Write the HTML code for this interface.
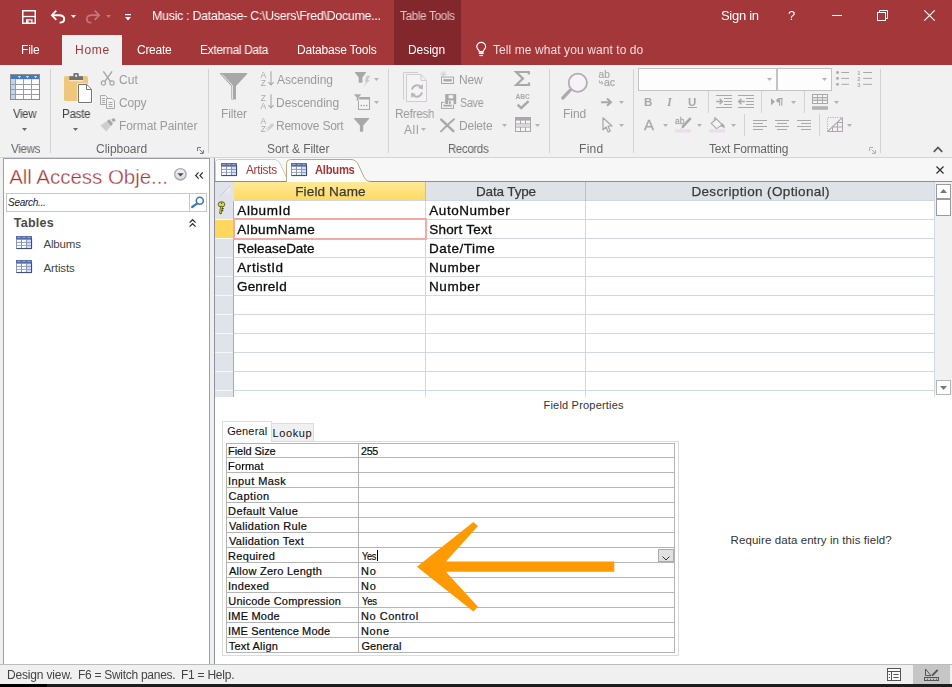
<!DOCTYPE html>
<html lang="en"><head><meta charset="utf-8"><title>Music : Database - Access</title>
<style>
html,body{margin:0;padding:0}
body{width:952px;height:687px;position:relative;overflow:hidden;background:#f0f0f0;font-family:"Liberation Sans",sans-serif}
.b{position:absolute;box-sizing:border-box;display:block}
.g,svg{will-change:transform}
.t{position:absolute;white-space:nowrap;margin:0;padding:0;transform-origin:0 0}
svg{overflow:visible}
</style></head><body>
<div class="b" style="left:0px;top:0px;width:952px;height:65px;background:#a4373a"></div>
<div class="b" style="left:394px;top:0px;width:67px;height:65px;background:#82282c"></div>
<div class="b" style="left:62px;top:35px;width:60px;height:31px;background:#f1f1f1"></div>
<div class="t g" style="left:151.79px;top:9px;font-size:13px;line-height:13px;color:#fff;letter-spacing:-0.300px;transform:scaleX(0.9532);">Music : Database- C:\Users\Fred\Docume...</div>
<div class="t g" style="left:399.76px;top:10px;font-size:12px;line-height:12px;color:#e6c3c4;letter-spacing:-0.300px;transform:scaleX(0.9693);">Table Tools</div>
<div class="t g" style="left:721.08px;top:9px;font-size:13px;line-height:13px;color:#fff;letter-spacing:-0.300px;transform:scaleX(0.9877);">Sign in</div>
<div class="t g" style="left:787.54px;top:9px;font-size:13px;line-height:13px;color:#fff;">?</div>
<div class="t g" style="left:20.80px;top:44px;font-size:12px;line-height:12px;color:#fff;letter-spacing:-0.204px;">File</div>
<div class="t g" style="left:74.70px;top:44px;font-size:12px;line-height:12px;color:#a4373a;letter-spacing:0.754px;">Home</div>
<div class="t g" style="left:136.78px;top:44px;font-size:12px;line-height:12px;color:#fff;letter-spacing:-0.275px;">Create</div>
<div class="t g" style="left:199.61px;top:44px;font-size:12px;line-height:12px;color:#fff;letter-spacing:-0.300px;transform:scaleX(0.9884);">External Data</div>
<div class="t g" style="left:296.60px;top:44px;font-size:12px;line-height:12px;color:#fff;letter-spacing:-0.220px;">Database Tools</div>
<div class="t g" style="left:408.40px;top:44px;font-size:12px;line-height:12px;color:#fff;letter-spacing:-0.052px;">Design</div>
<div class="t g" style="left:493.25px;top:44px;font-size:12px;line-height:12px;color:#f3dcdc;letter-spacing:0.084px;">Tell me what you want to do</div>
<div class="b" style="left:0px;top:65px;width:952px;height:92px;background:#f1f1f1"></div>
<div class="b" style="left:0px;top:157px;width:952px;height:1px;background:#d4d4d4"></div>
<div class="b" style="left:50px;top:69px;width:1px;height:84px;background:#d2d2d2"></div>
<div class="b" style="left:208px;top:69px;width:1px;height:84px;background:#d2d2d2"></div>
<div class="b" style="left:388px;top:69px;width:1px;height:84px;background:#d2d2d2"></div>
<div class="b" style="left:549px;top:69px;width:1px;height:84px;background:#d2d2d2"></div>
<div class="b" style="left:633px;top:69px;width:1px;height:84px;background:#d2d2d2"></div>
<div class="b" style="left:880px;top:69px;width:1px;height:84px;background:#d2d2d2"></div>
<div class="b" style="left:708px;top:91px;width:1px;height:22px;background:#d2d2d2"></div>
<div class="b" style="left:761px;top:91px;width:1px;height:22px;background:#d2d2d2"></div>
<div class="b" style="left:804px;top:91px;width:1px;height:22px;background:#d2d2d2"></div>
<div class="b" style="left:744px;top:114px;width:1px;height:22px;background:#d2d2d2"></div>
<div class="b" style="left:819px;top:114px;width:1px;height:22px;background:#d2d2d2"></div>
<div class="t g" style="left:12.54px;top:108px;font-size:12px;line-height:12px;color:#444444;letter-spacing:-0.300px;transform:scaleX(0.9416);">View</div>
<div class="t g" style="left:10.54px;top:143px;font-size:12px;line-height:12px;color:#666666;letter-spacing:-0.300px;transform:scaleX(0.9664);">Views</div>
<div class="t g" style="left:61.93px;top:108px;font-size:12px;line-height:12px;color:#444444;letter-spacing:-0.300px;transform:scaleX(0.9705);">Paste</div>
<div class="t g" style="left:119.17px;top:74px;font-size:12px;line-height:12px;color:#9b9b9b;letter-spacing:0.081px;">Cut</div>
<div class="t g" style="left:119.17px;top:97px;font-size:12px;line-height:12px;color:#9b9b9b;letter-spacing:-0.158px;">Copy</div>
<div class="t g" style="left:118.80px;top:120px;font-size:12px;line-height:12px;color:#9b9b9b;letter-spacing:-0.076px;">Format Painter</div>
<div class="t g" style="left:95.97px;top:143px;font-size:12px;line-height:12px;color:#666666;letter-spacing:-0.030px;">Clipboard</div>
<div class="t g" style="left:221.20px;top:108px;font-size:12px;line-height:12px;color:#9b9b9b;letter-spacing:-0.140px;">Filter</div>
<div class="t g" style="left:277.20px;top:74px;font-size:12px;line-height:12px;color:#9b9b9b;letter-spacing:-0.006px;">Ascending</div>
<div class="t g" style="left:276.20px;top:97px;font-size:12px;line-height:12px;color:#9b9b9b;letter-spacing:-0.029px;">Descending</div>
<div class="t g" style="left:276.20px;top:120px;font-size:12px;line-height:12px;color:#9b9b9b;letter-spacing:-0.234px;">Remove Sort</div>
<div class="t g" style="left:266.74px;top:143px;font-size:12px;line-height:12px;color:#666666;letter-spacing:-0.077px;">Sort &amp; Filter</div>
<div class="t g" style="left:394.61px;top:108px;font-size:12px;line-height:12px;color:#9b9b9b;letter-spacing:-0.300px;transform:scaleX(0.9857);">Refresh</div>
<div class="t g" style="left:404.20px;top:124px;font-size:12px;line-height:12px;color:#9b9b9b;letter-spacing:0.619px;">All</div>
<div class="t g" style="left:459.00px;top:74px;font-size:12px;line-height:12px;color:#9b9b9b;letter-spacing:-0.150px;">New</div>
<div class="t g" style="left:459.50px;top:97px;font-size:12px;line-height:12px;color:#9b9b9b;letter-spacing:-0.300px;transform:scaleX(0.8955);">Save</div>
<div class="t g" style="left:459.00px;top:120px;font-size:12px;line-height:12px;color:#9b9b9b;letter-spacing:-0.225px;">Delete</div>
<div class="t g" style="left:448.05px;top:143px;font-size:12px;line-height:12px;color:#666666;letter-spacing:-0.300px;transform:scaleX(0.9457);">Records</div>
<div class="t g" style="left:563.20px;top:108px;font-size:12px;line-height:12px;color:#9b9b9b;letter-spacing:-0.054px;">Find</div>
<div class="t g" style="left:579.30px;top:143px;font-size:12px;line-height:12px;color:#666666;letter-spacing:0.312px;">Find</div>
<div class="t g" style="left:709.05px;top:143px;font-size:12px;line-height:12px;color:#666666;letter-spacing:-0.230px;">Text Formatting</div>
<div class="b" style="left:3px;top:158px;width:207px;height:506px;background:#fff;border:1px solid #9aa0a8;border-bottom:none"></div>
<div class="t" style="left:9.14px;top:167px;font-size:20.5px;line-height:20.5px;color:#a4373a;letter-spacing:-0.033px;-webkit-text-stroke:0.35px #fff;">All Access Obje...</div>
<div class="b" style="left:6px;top:193px;width:201px;height:19px;background:#fff;border:1px solid #c8c8c8"></div>
<div class="b" style="left:189px;top:194px;width:1px;height:17px;background:#c8c8c8"></div>
<div class="t" style="left:7.90px;top:197px;font-size:10.5px;line-height:10.5px;color:#1a1a2a;letter-spacing:-0.300px;transform:scaleX(0.9517);font-style:italic;">Search...</div>
<div class="t" style="left:13.78px;top:217px;font-size:12.5px;line-height:12.5px;color:#4d4a48;letter-spacing:0.248px;font-weight:bold;">Tables</div>
<div class="t" style="left:43.50px;top:239px;font-size:11.5px;line-height:11.5px;color:#444444;letter-spacing:-0.188px;">Albums</div>
<div class="t" style="left:43.50px;top:263px;font-size:11.5px;line-height:11.5px;color:#444444;letter-spacing:-0.100px;">Artists</div>
<div class="b" style="left:214px;top:158px;width:738px;height:506px;background:#fff;border-left:1px solid #8d9199"></div>
<div class="b" style="left:215px;top:158px;width:737px;height:24px;background:#f7f7f7"></div>
<div class="b" style="left:215px;top:181px;width:737px;height:1px;background:#8e8e8e"></div>
<svg class="b" style="left:215px;top:158px" width="160" height="24" viewBox="0 0 160 24"><path d="M0.5,23 V5.5 Q0.5,1.5 4.5,1.5 H58 Q63,1.5 65.5,7 L71,19" fill="#fff" stroke="#989ba1"/><path d="M0.5,23 V5.5 Q0.5,1.5 4.5,1.5 H58 Q63,1.5 65.5,7 L71,19 V23 Z" fill="#fff" stroke="none"/><path d="M71.5,24.5 V5.5 Q71.5,1.5 75.5,1.5 H136 Q141,1.5 143.5,7 L149,19 Q151,23.5 155,23.5 V24.5 Z" fill="#fff" stroke="none"/><path d="M71.5,24 V5.5 Q71.5,1.5 75.5,1.5 H136 Q141,1.5 143.5,7 L149,19 Q151,23.5 155,23.5" fill="none" stroke="#bfa67c"/></svg>
<div class="t" style="left:245.60px;top:164px;font-size:12px;line-height:12px;color:#a4373a;letter-spacing:-0.300px;transform:scaleX(0.9879);">Artists</div>
<div class="t" style="left:315.41px;top:164px;font-size:12px;line-height:12px;color:#a4373a;letter-spacing:-0.300px;transform:scaleX(0.9379);font-weight:bold;">Albums</div>
<svg class="b" style="left:936px;top:166px" width="8" height="8" viewBox="0 0 8 8"><path d="M0.5,0.5 L7.5,7.5 M7.5,0.5 L0.5,7.5" stroke="#333" stroke-width="1.3" fill="none"/></svg>
<div class="b" style="left:215px;top:182px;width:19px;height:215px;background:#e0e4ea"></div>
<div class="b" style="left:234px;top:182px;width:192px;height:19px;background:linear-gradient(#fee998,#ffd95e)"></div>
<div class="b" style="left:426px;top:182px;width:509px;height:19px;background:#dfe3e8"></div>
<div class="b" style="left:215px;top:220px;width:19px;height:18px;background:#ffd75e"></div>
<div class="b" style="left:234px;top:200px;width:701px;height:1px;background:#d0d7e5"></div>
<div class="b" style="left:234px;top:219px;width:701px;height:1px;background:#d0d7e5"></div>
<div class="b" style="left:215px;top:219px;width:19px;height:1px;background:#f6f7f9"></div>
<div class="b" style="left:234px;top:238px;width:701px;height:1px;background:#d0d7e5"></div>
<div class="b" style="left:215px;top:238px;width:19px;height:1px;background:#f6f7f9"></div>
<div class="b" style="left:234px;top:257px;width:701px;height:1px;background:#d0d7e5"></div>
<div class="b" style="left:215px;top:257px;width:19px;height:1px;background:#f6f7f9"></div>
<div class="b" style="left:234px;top:276px;width:701px;height:1px;background:#d0d7e5"></div>
<div class="b" style="left:215px;top:276px;width:19px;height:1px;background:#f6f7f9"></div>
<div class="b" style="left:234px;top:295px;width:701px;height:1px;background:#d0d7e5"></div>
<div class="b" style="left:215px;top:295px;width:19px;height:1px;background:#f6f7f9"></div>
<div class="b" style="left:234px;top:314px;width:701px;height:1px;background:#d0d7e5"></div>
<div class="b" style="left:215px;top:314px;width:19px;height:1px;background:#f6f7f9"></div>
<div class="b" style="left:234px;top:333px;width:701px;height:1px;background:#d0d7e5"></div>
<div class="b" style="left:215px;top:333px;width:19px;height:1px;background:#f6f7f9"></div>
<div class="b" style="left:234px;top:352px;width:701px;height:1px;background:#d0d7e5"></div>
<div class="b" style="left:215px;top:352px;width:19px;height:1px;background:#f6f7f9"></div>
<div class="b" style="left:234px;top:371px;width:701px;height:1px;background:#d0d7e5"></div>
<div class="b" style="left:215px;top:371px;width:19px;height:1px;background:#f6f7f9"></div>
<div class="b" style="left:234px;top:390px;width:701px;height:1px;background:#d0d7e5"></div>
<div class="b" style="left:215px;top:390px;width:19px;height:1px;background:#f6f7f9"></div>
<div class="b" style="left:425px;top:182px;width:1px;height:215px;background:#d0d7e5"></div>
<div class="b" style="left:585px;top:182px;width:1px;height:215px;background:#d0d7e5"></div>
<div class="b" style="left:934px;top:182px;width:1px;height:215px;background:#d0d7e5"></div>
<div class="b" style="left:233px;top:201px;width:1px;height:196px;background:#a4acb9"></div>
<div class="b" style="left:425px;top:182px;width:1px;height:19px;background:#b9bec7"></div>
<div class="b" style="left:585px;top:182px;width:1px;height:19px;background:#b9bec7"></div>
<div class="b" style="left:233px;top:218px;width:194px;height:22px;border:2px solid #f3aaa5"></div>
<div class="t" style="left:295.18px;top:185px;font-size:13.5px;line-height:13.5px;color:#3a3a3a;letter-spacing:0.154px;-webkit-text-stroke:0.25px #3a3a3a;">Field Name</div>
<div class="t" style="left:475.98px;top:185px;font-size:13.5px;line-height:13.5px;color:#3a3a3a;letter-spacing:-0.141px;-webkit-text-stroke:0.25px #3a3a3a;">Data Type</div>
<div class="t" style="left:691.38px;top:185px;font-size:13.5px;line-height:13.5px;color:#3a3a3a;letter-spacing:0.365px;-webkit-text-stroke:0.25px #3a3a3a;">Description (Optional)</div>
<div class="t" style="left:237.34px;top:204px;font-size:13.5px;line-height:13.5px;color:#0c0c0c;letter-spacing:0.573px;-webkit-text-stroke:0.3px #0c0c0c;">AlbumId</div>
<div class="t" style="left:429.34px;top:204px;font-size:13.5px;line-height:13.5px;color:#0c0c0c;letter-spacing:0.522px;-webkit-text-stroke:0.3px #0c0c0c;">AutoNumber</div>
<div class="t" style="left:237.34px;top:223px;font-size:13.5px;line-height:13.5px;color:#0c0c0c;letter-spacing:0.409px;-webkit-text-stroke:0.3px #0c0c0c;">AlbumName</div>
<div class="t" style="left:429.18px;top:223px;font-size:13.5px;line-height:13.5px;color:#0c0c0c;letter-spacing:0.225px;-webkit-text-stroke:0.3px #0c0c0c;">Short Text</div>
<div class="t" style="left:236.88px;top:242px;font-size:13.5px;line-height:13.5px;color:#0c0c0c;letter-spacing:-0.037px;-webkit-text-stroke:0.3px #0c0c0c;">ReleaseDate</div>
<div class="t" style="left:429.07px;top:242px;font-size:13.5px;line-height:13.5px;color:#0c0c0c;letter-spacing:0.492px;-webkit-text-stroke:0.3px #0c0c0c;">Date/Time</div>
<div class="t" style="left:237.34px;top:261px;font-size:13.5px;line-height:13.5px;color:#0c0c0c;letter-spacing:0.534px;-webkit-text-stroke:0.3px #0c0c0c;">ArtistId</div>
<div class="t" style="left:429.07px;top:261px;font-size:13.5px;line-height:13.5px;color:#0c0c0c;letter-spacing:0.555px;-webkit-text-stroke:0.3px #0c0c0c;">Number</div>
<div class="t" style="left:237.01px;top:280px;font-size:13.5px;line-height:13.5px;color:#0c0c0c;letter-spacing:0.169px;-webkit-text-stroke:0.3px #0c0c0c;">GenreId</div>
<div class="t" style="left:429.07px;top:280px;font-size:13.5px;line-height:13.5px;color:#0c0c0c;letter-spacing:0.555px;-webkit-text-stroke:0.3px #0c0c0c;">Number</div>
<div class="b" style="left:935px;top:182px;width:17px;height:213px;background:#f1f1f1"></div>
<div class="b" style="left:936px;top:380px;width:15px;height:15px;background:#fff;border:1px solid #b5b5b5"></div>
<div class="b" style="left:936px;top:184px;width:15px;height:15px;background:#fff;border:1px solid #9b9b9b"></div>
<div class="b" style="left:936px;top:199px;width:15px;height:17px;background:#fff;border:1px solid #9b9b9b"></div>
<svg class="b" style="left:940px;top:189px" width="7" height="4" viewBox="0 0 7 4"><path d="M0,4 L3.5,0 L7,4 Z" fill="#777"/></svg>
<svg class="b" style="left:940px;top:386px" width="7" height="4" viewBox="0 0 7 4"><path d="M0,0 L3.5,4 L7,0 Z" fill="#777"/></svg>
<div class="t" style="left:543.52px;top:400px;font-size:11px;line-height:11px;color:#333;letter-spacing:0.199px;">Field Properties</div>
<div class="b" style="left:222px;top:441px;width:457px;height:215px;border:1px solid #dcdcdc;background:#fff"></div>
<div class="b" style="left:271px;top:423px;width:43px;height:19px;background:#f0f0f0;border:1px solid #dcdcdc"></div>
<div class="b" style="left:222px;top:421px;width:50px;height:21px;background:#fff;border:1px solid #dcdcdc;border-bottom:none"></div>
<div class="t" style="left:227.14px;top:426px;font-size:11px;line-height:11px;color:#111;letter-spacing:0.148px;">General</div>
<div class="t" style="left:272.52px;top:428px;font-size:11px;line-height:11px;color:#111;letter-spacing:0.598px;">Lookup</div>
<div class="b" style="left:226px;top:443px;width:449px;height:210px;border:1px solid #b4b4b4;background:#fff"></div>
<div class="b" style="left:227px;top:457px;width:447px;height:1px;background:#b4b4b4"></div>
<div class="b" style="left:227px;top:472px;width:447px;height:1px;background:#b4b4b4"></div>
<div class="b" style="left:227px;top:487px;width:447px;height:1px;background:#b4b4b4"></div>
<div class="b" style="left:227px;top:502px;width:447px;height:1px;background:#b4b4b4"></div>
<div class="b" style="left:227px;top:517px;width:447px;height:1px;background:#b4b4b4"></div>
<div class="b" style="left:227px;top:532px;width:447px;height:1px;background:#b4b4b4"></div>
<div class="b" style="left:227px;top:547px;width:447px;height:1px;background:#b4b4b4"></div>
<div class="b" style="left:227px;top:562px;width:447px;height:1px;background:#b4b4b4"></div>
<div class="b" style="left:227px;top:577px;width:447px;height:1px;background:#b4b4b4"></div>
<div class="b" style="left:227px;top:592px;width:447px;height:1px;background:#b4b4b4"></div>
<div class="b" style="left:227px;top:607px;width:447px;height:1px;background:#b4b4b4"></div>
<div class="b" style="left:227px;top:622px;width:447px;height:1px;background:#b4b4b4"></div>
<div class="b" style="left:227px;top:637px;width:447px;height:1px;background:#b4b4b4"></div>
<div class="b" style="left:358px;top:444px;width:1px;height:208px;background:#b4b4b4"></div>
<div class="t" style="left:228.12px;top:446px;font-size:11px;line-height:11px;color:#0a0a0a;letter-spacing:-0.082px;-webkit-text-stroke:0.2px #0a0a0a;">Field Size</div>
<div class="t" style="left:361.45px;top:446px;font-size:11px;line-height:11px;color:#0a0a0a;letter-spacing:-0.300px;transform:scaleX(0.9776);-webkit-text-stroke:0.2px #0a0a0a;">255</div>
<div class="t" style="left:228.12px;top:461px;font-size:11px;line-height:11px;color:#0a0a0a;letter-spacing:0.133px;-webkit-text-stroke:0.2px #0a0a0a;">Format</div>
<div class="t" style="left:228.00px;top:476px;font-size:11px;line-height:11px;color:#0a0a0a;letter-spacing:0.443px;-webkit-text-stroke:0.2px #0a0a0a;">Input Mask</div>
<div class="t" style="left:228.44px;top:491px;font-size:11px;line-height:11px;color:#0a0a0a;letter-spacing:0.469px;-webkit-text-stroke:0.2px #0a0a0a;">Caption</div>
<div class="t" style="left:228.12px;top:506px;font-size:11px;line-height:11px;color:#0a0a0a;letter-spacing:0.369px;-webkit-text-stroke:0.2px #0a0a0a;">Default Value</div>
<div class="t" style="left:228.94px;top:521px;font-size:11px;line-height:11px;color:#0a0a0a;letter-spacing:0.341px;-webkit-text-stroke:0.2px #0a0a0a;">Validation Rule</div>
<div class="t" style="left:228.94px;top:536px;font-size:11px;line-height:11px;color:#0a0a0a;letter-spacing:0.304px;-webkit-text-stroke:0.2px #0a0a0a;">Validation Text</div>
<div class="t" style="left:228.12px;top:551px;font-size:11px;line-height:11px;color:#0a0a0a;letter-spacing:0.291px;-webkit-text-stroke:0.2px #0a0a0a;">Required</div>
<div class="t" style="left:361.79px;top:551px;font-size:11px;line-height:11px;color:#0a0a0a;letter-spacing:-0.300px;transform:scaleX(0.8257);-webkit-text-stroke:0.2px #0a0a0a;">Yes</div>
<div class="t" style="left:229.00px;top:566px;font-size:11px;line-height:11px;color:#0a0a0a;letter-spacing:0.262px;-webkit-text-stroke:0.2px #0a0a0a;">Allow Zero Length</div>
<div class="t" style="left:361.12px;top:566px;font-size:11px;line-height:11px;color:#0a0a0a;letter-spacing:0.650px;-webkit-text-stroke:0.2px #0a0a0a;">No</div>
<div class="t" style="left:228.00px;top:581px;font-size:11px;line-height:11px;color:#0a0a0a;letter-spacing:0.294px;-webkit-text-stroke:0.2px #0a0a0a;">Indexed</div>
<div class="t" style="left:361.12px;top:581px;font-size:11px;line-height:11px;color:#0a0a0a;letter-spacing:0.650px;-webkit-text-stroke:0.2px #0a0a0a;">No</div>
<div class="t" style="left:228.19px;top:596px;font-size:11px;line-height:11px;color:#0a0a0a;letter-spacing:0.253px;-webkit-text-stroke:0.2px #0a0a0a;">Unicode Compression</div>
<div class="t" style="left:361.78px;top:596px;font-size:11px;line-height:11px;color:#0a0a0a;letter-spacing:-0.300px;transform:scaleX(0.8616);-webkit-text-stroke:0.2px #0a0a0a;">Yes</div>
<div class="t" style="left:228.00px;top:611px;font-size:11px;line-height:11px;color:#0a0a0a;letter-spacing:0.211px;-webkit-text-stroke:0.2px #0a0a0a;">IME Mode</div>
<div class="t" style="left:361.12px;top:611px;font-size:11px;line-height:11px;color:#0a0a0a;letter-spacing:0.496px;-webkit-text-stroke:0.2px #0a0a0a;">No Control</div>
<div class="t" style="left:228.00px;top:626px;font-size:11px;line-height:11px;color:#0a0a0a;letter-spacing:0.151px;-webkit-text-stroke:0.2px #0a0a0a;">IME Sentence Mode</div>
<div class="t" style="left:361.12px;top:626px;font-size:11px;line-height:11px;color:#0a0a0a;letter-spacing:0.554px;-webkit-text-stroke:0.2px #0a0a0a;">None</div>
<div class="t" style="left:228.75px;top:641px;font-size:11px;line-height:11px;color:#0a0a0a;letter-spacing:0.235px;-webkit-text-stroke:0.2px #0a0a0a;">Text Align</div>
<div class="t" style="left:361.44px;top:641px;font-size:11px;line-height:11px;color:#0a0a0a;letter-spacing:0.131px;-webkit-text-stroke:0.2px #0a0a0a;">General</div>
<div class="b" style="left:377px;top:550px;width:1px;height:11px;background:#000"></div>
<div class="b" style="left:658px;top:549px;width:16px;height:13px;background:#e1e1e1;border:1px solid #adadad"></div>
<svg class="b" style="left:662px;top:556px" width="8" height="5" viewBox="0 0 8 5"><path d="M0.5,0.5 L4,4 L7.5,0.5" fill="none" stroke="#333" stroke-width="1"/></svg>
<div class="t" style="left:730.56px;top:535px;font-size:11.5px;line-height:11.5px;color:#333;letter-spacing:0.082px;">Require data entry in this field?</div>
<svg class="b" style="left:0px;top:0px" width="952" height="687" viewBox="0 0 952 687"><polygon points="416.9,566.65 473.4,521.9 478,526 445.9,561.6 614.3,561.6 614.3,571.8 445.9,571.8 478,606.7 473.4,611.6" fill="#ff9a03"/></svg>
<div class="b" style="left:0px;top:664px;width:952px;height:20px;background:#f0f0f0;border-top:1px solid #bcbcbc"></div>
<div class="b" style="left:913px;top:665px;width:37px;height:19px;background:#c6c6c6"></div>
<div class="t g" style="left:6.80px;top:669px;font-size:12px;line-height:12px;color:#444;letter-spacing:-0.165px;">Design view.</div>
<div class="t g" style="left:77.80px;top:669px;font-size:12px;line-height:12px;color:#444;letter-spacing:-0.283px;">F6 = Switch panes.</div>
<div class="t g" style="left:181.00px;top:669px;font-size:12px;line-height:12px;color:#444;letter-spacing:-0.247px;">F1 = Help.</div>
<div class="b" style="left:0px;top:684px;width:952px;height:3px;background:#1d1d1d"></div>
<div class="b" style="left:0px;top:684px;width:47px;height:3px;background:#000"></div>
<svg class="b" style="left:22px;top:10px" width="14" height="14" viewBox="0 0 14 14"><rect x="0.75" y="0.75" width="12.5" height="12.5" fill="none" stroke="#ffffff" stroke-width="1.5"/><path d="M1,6.5 H13" fill="none" stroke="#ffffff" stroke-width="1.3"/><path d="M4.6,13.4 V9.9 H9.9 V13.4" fill="none" stroke="#ffffff" stroke-width="1.2"/><rect x="5.2" y="10.4" width="1.4" height="2.6" fill="#ffffff"/></svg>
<svg class="b" style="left:50px;top:9px" width="16" height="15" viewBox="0 0 16 15"><path d="M2.2,6.2 H9 Q14.2,6.2 14.2,10.2 Q14.2,13.6 9.6,13.6" fill="none" stroke="#ffffff" stroke-width="1.9"/><path d="M6.3,1.6 L1.8,6.2 L6.3,10.8" fill="none" stroke="#ffffff" stroke-width="1.7"/></svg>
<svg class="b" style="left:71px;top:15px" width="5" height="3" viewBox="0 0 5 3"><path d="M0,0 H5 L2.5,3 Z" fill="#ffffff"/></svg>
<svg class="b" style="left:85px;top:9px" width="16" height="15" viewBox="0 0 16 15"><path d="M13.8,6.2 H7 Q1.8,6.2 1.8,10.2 Q1.8,13.6 6.4,13.6" fill="none" stroke="#c4767a" stroke-width="1.7"/><path d="M9.7,1.6 L14.2,6.2 L9.7,10.8" fill="none" stroke="#c4767a" stroke-width="1.7"/></svg>
<svg class="b" style="left:106px;top:15px" width="5" height="3" viewBox="0 0 5 3"><path d="M0,0 H5 L2.5,3 Z" fill="#c4767a"/></svg>
<svg class="b" style="left:125px;top:14px" width="6" height="7" viewBox="0 0 6 7"><rect x="0" y="0" width="6" height="1.2" fill="#ffffff"/><path d="M0,3 H6 L3,6.4 Z" fill="#ffffff"/></svg>
<svg class="b" style="left:832px;top:15px" width="10" height="1" viewBox="0 0 10 1"><rect width="10" height="1" fill="#ffffff"/></svg>
<svg class="b" style="left:877px;top:10px" width="11" height="11" viewBox="0 0 11 11"><rect x="0.5" y="2.5" width="8" height="8" fill="none" stroke="#ffffff"/><path d="M2.5,2.5 V0.5 H10.5 V8.5 H8.5" fill="none" stroke="#ffffff"/></svg>
<svg class="b" style="left:924px;top:10px" width="11" height="11" viewBox="0 0 11 11"><path d="M0.3,0.3 L10.7,10.7 M10.7,0.3 L0.3,10.7" stroke="#ffffff" stroke-width="1.1" fill="none"/></svg>
<svg class="b" style="left:476.3px;top:42px" width="11" height="15" viewBox="0 0 11 15"><path d="M3.3,9.7 C3.3,8 0.8,7 0.8,4.7 A4.4,4.4 0 0 1 9.6,4.7 C9.6,7 7.1,8 7.1,9.7 Z" fill="none" stroke="#ffffff" stroke-width="1.2"/><rect x="2.8" y="10.2" width="4.8" height="1.9" fill="#ffffff"/><rect x="3.4" y="13.1" width="3.6" height="1" fill="#ffffff"/></svg>
<svg class="b" style="left:10px;top:74px" width="30" height="26" viewBox="0 0 30 26"><rect x="0.5" y="0.5" width="29" height="25" fill="#fff" stroke="#8c8c8c"/><rect x="1" y="1" width="28" height="4.2" fill="#4279c2"/><rect x="1" y="5.2" width="4" height="19.8" fill="#bdd5ef"/><path d="M5.5,5.2 V25" stroke="#9c9c9c" stroke-width="1"/><path d="M13.5,5.2 V25" stroke="#9c9c9c" stroke-width="1"/><path d="M21.5,5.2 V25" stroke="#9c9c9c" stroke-width="1"/><path d="M1,10.5 H29" stroke="#9c9c9c" stroke-width="1"/><path d="M1,15.5 H29" stroke="#9c9c9c" stroke-width="1"/><path d="M1,20.5 H29" stroke="#9c9c9c" stroke-width="1"/><path d="M7.800000000000001,2.2 H11.0 L9.4,4.1 Z" fill="#fff"/><path d="M15.9,2.2 H19.1 L17.5,4.1 Z" fill="#fff"/><path d="M24.0,2.2 H27.200000000000003 L25.6,4.1 Z" fill="#fff"/></svg>
<svg class="b" style="left:22px;top:128px" width="5" height="3" viewBox="0 0 5 3"><path d="M0,0 H5 L2.5,3 Z" fill="#6a6a6a"/></svg>
<svg class="b" style="left:64px;top:73px" width="29" height="31" viewBox="0 0 29 31"><rect x="0" y="3" width="24" height="25" rx="1.6" fill="#efc77c"/><rect x="5.2" y="6.9" width="14" height="1.4" fill="#f7e4bd"/><path d="M5.3,3.3 H9.4 V1.2 Q9.4,0 10.6,0 H13.6 Q14.8,0 14.8,1.2 V3.3 H19 V6.9 H5.3 Z" fill="#727272"/><rect x="11.2" y="1.7" width="1.9" height="2.1" fill="#f1f1f1"/><path d="M13.4,10.4 H23 L28.6,16 V30.4 H13.4 Z" fill="#fff"/><path d="M14.5,11.5 H22.8 L27.5,16.2 V29.5 H14.5 Z" fill="#fff" stroke="#767676" stroke-width="1"/><path d="M22.5,11.5 V16.5 H27.5" fill="none" stroke="#767676" stroke-width="1"/></svg>
<svg class="b" style="left:73px;top:128px" width="5" height="3" viewBox="0 0 5 3"><path d="M0,0 H5 L2.5,3 Z" fill="#6a6a6a"/></svg>
<svg class="b" style="left:100px;top:71px" width="16" height="15" viewBox="0 0 16 15"><path d="M3.3,0.4 L10.6,10.6 M12.1,0.4 L4.8,10.6" stroke="#a9a8a9" stroke-width="1.5" fill="none"/><circle cx="3.4" cy="12" r="2.1" fill="none" stroke="#a9a8a9" stroke-width="1.2"/><circle cx="12" cy="12" r="2.1" fill="none" stroke="#a9a8a9" stroke-width="1.2"/></svg>
<svg class="b" style="left:100px;top:95px" width="16" height="14" viewBox="0 0 16 14"><path d="M6.5,9.5 H0.5 V0.5 H5.5 L7.5,2.5 V3.5" fill="none" stroke="#a9a8a9" stroke-width="1"/><path d="M2,3.5 H5 M2,5.5 H5 M2,7.5 H5" stroke="#a9a8a9" stroke-width="1"/><path d="M6.5,3.5 H12 L14.5,6 V13.5 H6.5 Z" fill="#f6f5f6" stroke="#a9a8a9" stroke-width="1"/><path d="M8.5,7.5 H12.5 M8.5,9.5 H12.5 M8.5,11.5 H12.5" stroke="#a9a8a9" stroke-width="1"/></svg>
<svg class="b" style="left:100px;top:118px" width="17" height="14" viewBox="0 0 17 14"><path d="M0.4,7.6 L6.2,3.6 L10.6,8.6 L6.2,13.4 Z" fill="#cfcecf"/><path d="M6.6,3.2 L9.4,1.2 L13,5.4 L10.9,8.2 Z" fill="#a9a8a9"/><path d="M11.2,1.6 L13.8,0 L15.8,2.2 L13.4,4.2 Z" fill="#a9a8a9"/></svg>
<svg class="b" style="left:197px;top:147px" width="7" height="6" viewBox="0 0 7 6"><path d="M0.5,4 V0.5 H4" fill="none" stroke="#777" stroke-width="1"/><path d="M2.5,2.5 L6,6 M6.4,3 V6.4 H3" fill="none" stroke="#777" stroke-width="1"/></svg>
<svg class="b" style="left:869px;top:147px" width="7" height="6" viewBox="0 0 7 6"><path d="M0.5,4 V0.5 H4" fill="none" stroke="#b0b0b0" stroke-width="1"/><path d="M2.5,2.5 L6,6 M6.4,3 V6.4 H3" fill="none" stroke="#b0b0b0" stroke-width="1"/></svg>
<svg class="b" style="left:220px;top:73px" width="28" height="27" viewBox="0 0 28 27"><path d="M0,0 H27.2 V1 L16,13 V26.6 H11.2 V13 L0,1 Z" fill="#a9a8a9"/><path d="M2.2,1.4 L12.4,12.4 V26" fill="none" stroke="#f1f1f1" stroke-width="0.9"/></svg>
<svg class="b" style="left:259.5px;top:71px" width="15" height="15" viewBox="0 0 15 15"><text x="3.3" y="6.6" font-family="Liberation Sans, sans-serif" font-size="8.4" text-anchor="middle" fill="#a9a8a9">A</text><text x="3.3" y="14.6" font-family="Liberation Sans, sans-serif" font-size="8.4" text-anchor="middle" fill="#a9a8a9">Z</text><path d="M11,0.2 V14 M8.4,11.2 L11,14 L13.6,11.2" fill="none" stroke="#a9a8a9" stroke-width="1.1"/></svg>
<svg class="b" style="left:259.5px;top:94px" width="15" height="15" viewBox="0 0 15 15"><text x="3.3" y="6.6" font-family="Liberation Sans, sans-serif" font-size="8.4" text-anchor="middle" fill="#a9a8a9">Z</text><text x="3.3" y="14.6" font-family="Liberation Sans, sans-serif" font-size="8.4" text-anchor="middle" fill="#a9a8a9">A</text><path d="M11,0.2 V14 M8.4,11.2 L11,14 L13.6,11.2" fill="none" stroke="#a9a8a9" stroke-width="1.1"/></svg>
<svg class="b" style="left:259.5px;top:117.4px" width="15" height="15" viewBox="0 0 15 15"><text x="3.3" y="6.6" font-family="Liberation Sans, sans-serif" font-size="8.4" text-anchor="middle" fill="#a9a8a9">A</text><text x="3.3" y="14.6" font-family="Liberation Sans, sans-serif" font-size="8.4" text-anchor="middle" fill="#a9a8a9">Z</text><path d="M7.6,13.4 L12,9 L14.2,11.2 L9.8,15.4 Z" fill="#cfcecf" transform="translate(0,-3)"/><path d="M5.6,11.8 L7.4,10.2 L9.8,12.6 L8,14.4 Z" fill="#dcdbdc"/></svg>
<svg class="b" style="left:355px;top:72px" width="16" height="16" viewBox="0 0 16 16"><path d="M0,0 H11 V0.8 L7.4,5.6 V10.8 H3.7 V5.6 L0,0.8 Z" fill="#a9a8a9"/><path d="M15.2,3.7 H11.6 L9.6,9.6 H11.6 L8,15.2 L14.8,8 H12.8 Z" fill="#cbc9cb"/></svg>
<svg class="b" style="left:374px;top:78px" width="5" height="3" viewBox="0 0 5 3"><path d="M0,0 H5 L2.5,3 Z" fill="#b3b3b3"/></svg>
<svg class="b" style="left:354px;top:94px" width="17" height="16" viewBox="0 0 17 16"><path d="M0,0 H7.2 V0.6 L4.8,3.4 V6.8 H2.6 V3.4 L0,0.6 Z" fill="#a9a8a9"/><rect x="4.5" y="3.6" width="11" height="11.8" fill="#f5f3f5" stroke="#a9a8a9" stroke-width="1"/><rect x="5" y="3.1" width="10.5" height="2.4" fill="#a9a8a9"/><path d="M0,0 H7.2 V0.6 L4.8,3.4 V6.8 H2.6 V3.4 L0,0.6 Z" fill="#a9a8a9" stroke="#f1f1f1" stroke-width="0.6"/><rect x="6.6" y="10.8" width="1.5" height="1.5" fill="#a9a8a9"/><rect x="9.3" y="10.8" width="1.5" height="1.5" fill="#a9a8a9"/><rect x="12" y="10.8" width="1.5" height="1.5" fill="#a9a8a9"/></svg>
<svg class="b" style="left:374px;top:101px" width="5" height="3" viewBox="0 0 5 3"><path d="M0,0 H5 L2.5,3 Z" fill="#b3b3b3"/></svg>
<svg class="b" style="left:354px;top:118px" width="16" height="14" viewBox="0 0 16 14"><path d="M0,0 H15.2 V0.8 L9.2,7.4 V13.7 H5.9 V7.4 L0,0.8 Z" fill="#a9a8a9"/></svg>
<svg class="b" style="left:403px;top:72px" width="25" height="30" viewBox="0 0 25 30"><path d="M0.5,27.5 V0.5 H15" fill="none" stroke="#cfcecf" stroke-width="1"/><path d="M3.5,2.5 H18 L23.5,8.5 V29.5 H3.5 Z" fill="#f6f3f6" stroke="#cfcecf" stroke-width="1"/><path d="M18,2.5 V8.5 H23.5" fill="none" stroke="#cfcecf" stroke-width="1"/><path d="M9,17.6 A5.2,5.2 0 0 1 18,15" fill="none" stroke="#b9b7b9" stroke-width="1.9"/><path d="M15.2,16 L19.9,12 L19.9,17.6 Z" fill="#b9b7b9"/><path d="M19,20.4 A5.2,5.2 0 0 1 10,23" fill="none" stroke="#b9b7b9" stroke-width="1.9"/><path d="M12.8,22 L8.1,26 L8.1,20.4 Z" fill="#b9b7b9"/></svg>
<svg class="b" style="left:421px;top:128px" width="5" height="3" viewBox="0 0 5 3"><path d="M0,0 H5 L2.5,3 Z" fill="#b3b3b3"/></svg>
<svg class="b" style="left:440px;top:71px" width="15" height="14" viewBox="0 0 15 14"><path d="M3.4,0 V6.4 M0.2,3.2 H6.6 M1.1,0.9 L5.7,5.5 M5.7,0.9 L1.1,5.5" stroke="#cfcecf" stroke-width="0.8" fill="none"/><rect x="1.5" y="6.1" width="12" height="6.4" fill="#f4f3f4" stroke="#a9a8a9" stroke-width="1"/><rect x="3.4" y="8.1" width="8.4" height="2.4" fill="#a9a8a9"/></svg>
<svg class="b" style="left:440px;top:94px" width="17" height="15" viewBox="0 0 17 15"><rect x="1.5" y="8.4" width="12" height="6" fill="#f4f3f4" stroke="#a9a8a9" stroke-width="1"/><rect x="3.4" y="10.6" width="8.4" height="1.9" fill="#a9a8a9"/><rect x="4.6" y="-0.4" width="12" height="11" fill="#f1f1f1"/><rect x="5.2" y="0.1" width="11" height="10" fill="#a9a8a9"/><rect x="8.6" y="1.2" width="4.6" height="3.2" fill="#f4f3f4"/><rect x="8.2" y="6.4" width="5.4" height="3.7" fill="#f4f3f4"/><rect x="9" y="7" width="1.7" height="3.1" fill="#a9a8a9"/></svg>
<svg class="b" style="left:440px;top:118px" width="16" height="15" viewBox="0 0 16 15"><path d="M1.2,1.6 L13.4,13.2" stroke="#a9a8a9" stroke-width="2.4" stroke-linecap="round" fill="none"/><path d="M14,1.2 Q8,6 1,13.4" stroke="#a9a8a9" stroke-width="1.9" stroke-linecap="round" fill="none"/></svg>
<svg class="b" style="left:502px;top:124px" width="5" height="3" viewBox="0 0 5 3"><path d="M0,0 H5 L2.5,3 Z" fill="#b3b3b3"/></svg>
<svg class="b" style="left:515px;top:71px" width="15" height="15" viewBox="0 0 15 15"><path d="M13.8,3.4 V1 H1.2 L8,7.6 L1.2,14 H14 V11.4" fill="none" stroke="#a9a8a9" stroke-width="2.2" stroke-linejoin="miter"/></svg>
<svg class="b" style="left:515px;top:93px" width="16" height="17" viewBox="0 0 16 17"><text x="7.6" y="5.8" font-family="Liberation Sans, sans-serif" font-weight="bold" font-size="6.6" text-anchor="middle" fill="#a9a8a9">ABC</text><path d="M2.6,11.6 L6.2,15 L13.6,8.2" fill="none" stroke="#a9a8a9" stroke-width="2.4"/></svg>
<svg class="b" style="left:515px;top:117px" width="16" height="15" viewBox="0 0 16 15"><rect x="0" y="0" width="16" height="15" fill="#a9a8a9"/><rect x="1.0" y="3.6" width="4" height="2.8" fill="#f6f4f6"/><rect x="1.0" y="10.6" width="4" height="3.4" fill="#f6f4f6"/><rect x="6.0" y="3.6" width="4" height="2.8" fill="#f6f4f6"/><rect x="6.0" y="10.6" width="4" height="3.4" fill="#f6f4f6"/><rect x="11.0" y="3.6" width="4" height="2.8" fill="#f6f4f6"/><rect x="11.0" y="10.6" width="4" height="3.4" fill="#f6f4f6"/><rect x="1" y="7" width="14" height="3" fill="#d9d7d9"/></svg>
<svg class="b" style="left:535px;top:124px" width="5" height="3" viewBox="0 0 5 3"><path d="M0,0 H5 L2.5,3 Z" fill="#b3b3b3"/></svg>
<svg class="b" style="left:560px;top:72px" width="29" height="29" viewBox="0 0 29 29"><circle cx="17.8" cy="10.8" r="9.1" fill="#f7f2f7" stroke="#b0aeb0" stroke-width="1.8"/><path d="M10,18.4 L2.8,26" stroke="#adabad" stroke-width="3.3" stroke-linecap="round"/></svg>
<svg class="b" style="left:598px;top:71px" width="18" height="16" viewBox="0 0 18 16"><text x="0.6" y="7.2" font-family="Liberation Sans, sans-serif" font-size="10" fill="#a9a8a9" stroke="#a9a8a9" stroke-width="0.2">ab</text><text x="6" y="14.5" font-family="Liberation Sans, sans-serif" font-size="10.5" fill="#a9a8a9" stroke="#a9a8a9" stroke-width="0.25">ac</text><path d="M1.4,9.4 V11.8 H4.8 M3.2,10.2 L5,11.8 L3.2,13.4" fill="none" stroke="#a9a8a9" stroke-width="0.9"/></svg>
<svg class="b" style="left:600px;top:98px" width="13" height="9" viewBox="0 0 13 9"><path d="M1,4.2 H10.6 M7,0.6 L11,4.2 L7,7.8" fill="none" stroke="#a9a8a9" stroke-width="2"/></svg>
<svg class="b" style="left:619px;top:101px" width="5" height="3" viewBox="0 0 5 3"><path d="M0,0 H5 L2.5,3 Z" fill="#b3b3b3"/></svg>
<svg class="b" style="left:602px;top:117px" width="11" height="16" viewBox="0 0 11 16"><path d="M1,0.8 V12.8 L4,10 L6.2,15 L8.2,14.1 L6,9.2 L10,9 Z" fill="#f6f3f6" stroke="#a9a8a9" stroke-width="1.25" stroke-linejoin="round"/></svg>
<svg class="b" style="left:619px;top:124px" width="5" height="3" viewBox="0 0 5 3"><path d="M0,0 H5 L2.5,3 Z" fill="#b3b3b3"/></svg>
<div class="b" style="left:638px;top:68px;width:139px;height:23px;background:#fdfdfd;border:1px solid #c3c3c3"></div>
<div class="b" style="left:777px;top:68px;width:55px;height:23px;background:#fdfdfd;border:1px solid #c3c3c3"></div>
<svg class="b" style="left:767px;top:78px" width="5" height="3" viewBox="0 0 5 3"><path d="M0,0 H5 L2.5,3 Z" fill="#b3b3b3"/></svg>
<svg class="b" style="left:822px;top:78px" width="5" height="3" viewBox="0 0 5 3"><path d="M0,0 H5 L2.5,3 Z" fill="#b3b3b3"/></svg>
<div class="t g" style="left:643.85px;top:97px;font-size:11.5px;line-height:11.5px;color:#a9a8a9;font-weight:bold;">B</div>
<div class="t g" style="left:667.35px;top:96px;font-size:12.5px;line-height:12.5px;color:#a9a8a9;font-weight:bold;font-style:italic;font-family:'Liberation Serif',serif;">I</div>
<div class="t g" style="left:688.01px;top:97px;font-size:11.5px;line-height:11.5px;color:#a9a8a9;font-weight:bold;">U</div>
<div class="b" style="left:688px;top:107px;width:9px;height:1px;background:#a9a8a9"></div>
<svg class="b" style="left:836px;top:70px" width="14" height="17" viewBox="0 0 14 17"><circle cx="1.5" cy="2.5" r="1.4" fill="#a9a8a9"/><path d="M5.3,2.5 H13" stroke="#a9a8a9" stroke-width="1"/><circle cx="1.5" cy="8.4" r="1.4" fill="#a9a8a9"/><path d="M5.3,8.4 H13" stroke="#a9a8a9" stroke-width="1"/><circle cx="1.5" cy="14.3" r="1.4" fill="#a9a8a9"/><path d="M5.3,14.3 H13" stroke="#a9a8a9" stroke-width="1"/></svg>
<svg class="b" style="left:857px;top:70px" width="16" height="17" viewBox="0 0 16 17"><text x="1.8" y="4.7" font-family="Liberation Sans, sans-serif" font-weight="bold" font-size="5.8" text-anchor="middle" fill="#a9a8a9">1</text><path d="M6.2,2.5 H15" stroke="#a9a8a9" stroke-width="1"/><text x="1.8" y="10.600000000000001" font-family="Liberation Sans, sans-serif" font-weight="bold" font-size="5.8" text-anchor="middle" fill="#a9a8a9">2</text><path d="M6.2,8.4 H15" stroke="#a9a8a9" stroke-width="1"/><text x="1.8" y="16.5" font-family="Liberation Sans, sans-serif" font-weight="bold" font-size="5.8" text-anchor="middle" fill="#a9a8a9">3</text><path d="M6.2,14.3 H15" stroke="#a9a8a9" stroke-width="1"/></svg>
<svg class="b" style="left:716px;top:95px" width="16" height="13" viewBox="0 0 16 13"><path d="M0,0.5 H16 M8,3.5 H16 M8,6.5 H16 M8,9.5 H16 M0,12.5 H16" stroke="#a9a8a9" stroke-width="1"/><path d="M0.2,6.5 H6.2 M3.6,3.8 L6.4,6.5 L3.6,9.2" fill="none" stroke="#a9a8a9" stroke-width="1.3"/></svg>
<svg class="b" style="left:738px;top:95px" width="16" height="13" viewBox="0 0 16 13"><path d="M0,0.5 H16 M8,3.5 H16 M8,6.5 H16 M8,9.5 H16 M0,12.5 H16" stroke="#a9a8a9" stroke-width="1"/><path d="M0.8,6.5 H6.8 M3.4,3.8 L0.6,6.5 L3.4,9.2" fill="none" stroke="#a9a8a9" stroke-width="1.3"/></svg>
<svg class="b" style="left:771px;top:98px" width="12" height="8" viewBox="0 0 12 8"><path d="M0,0.2 L4,3.7 L0,7.2 Z" fill="#a9a8a9"/><path d="M9,0.6 H7.6 Q5.2,0.6 5.2,2.6 Q5.2,4.6 7.6,4.6 H8.4 V0.6 Z" fill="#a9a8a9"/><path d="M8.6,0.5 V7.8 M10.8,0.5 V7.8 M7.4,0.5 H11.8" stroke="#a9a8a9" stroke-width="1.1" fill="none"/></svg>
<svg class="b" style="left:791px;top:101px" width="5" height="3" viewBox="0 0 5 3"><path d="M0,0 H5 L2.5,3 Z" fill="#b3b3b3"/></svg>
<svg class="b" style="left:812px;top:94px" width="16" height="16" viewBox="0 0 16 16"><rect x="0.5" y="0.5" width="15" height="9" fill="#f6f3f6" stroke="#a9a8a9" stroke-width="1"/><rect x="1" y="3.6" width="14" height="2.8" fill="#dcdbdc"/><path d="M0.5,3.5 H15.5 M0.5,6.5 H15.5 M5.5,0.5 V9.5 M10.5,0.5 V9.5" stroke="#a9a8a9" stroke-width="0.9" fill="none"/><rect x="0" y="12.2" width="16" height="3.6" fill="#b4b2b4"/></svg>
<svg class="b" style="left:834px;top:101px" width="5" height="3" viewBox="0 0 5 3"><path d="M0,0 H5 L2.5,3 Z" fill="#b3b3b3"/></svg>
<div class="t g" style="left:644.44px;top:117px;font-size:15px;line-height:15px;color:#a9a8a9;-webkit-text-stroke:0.3px #a9a8a9;">A</div>
<svg class="b" style="left:663px;top:124px" width="5" height="3" viewBox="0 0 5 3"><path d="M0,0 H5 L2.5,3 Z" fill="#b3b3b3"/></svg>
<svg class="b" style="left:675px;top:117px" width="17" height="16" viewBox="0 0 17 16"><text x="0" y="6.6" font-family="Liberation Sans, sans-serif" font-size="8.4" fill="#a9a8a9" stroke="#a9a8a9" stroke-width="0.3">ab</text><path d="M15,1.8 L8,9.4" stroke="#a9a8a9" stroke-width="2.6" stroke-linecap="round" fill="none"/><path d="M8.2,8.6 L5.6,12 L9.4,10 Z" fill="#a9a8a9"/><rect x="0.2" y="12.2" width="15.8" height="3.4" fill="#e8dfe8"/></svg>
<svg class="b" style="left:697px;top:124px" width="5" height="3" viewBox="0 0 5 3"><path d="M0,0 H5 L2.5,3 Z" fill="#b3b3b3"/></svg>
<svg class="b" style="left:709px;top:117px" width="17" height="16" viewBox="0 0 17 16"><path d="M7.4,2 L13.2,7.6 L7.6,11.6 L2.2,6.4 Z" fill="#f6f3f6" stroke="#a9a8a9" stroke-width="1.1" stroke-linejoin="round"/><path d="M5.4,4.2 V1 Q5.4,0.4 6.2,0.4 Q7,0.4 7,1 V3" fill="none" stroke="#a9a8a9" stroke-width="0.9"/><path d="M12.6,6.2 Q16.2,7.4 15.6,11.4 Q14,9.4 11.2,9.2 Z" fill="#a9a8a9"/><rect x="0.1" y="12.2" width="15.9" height="3.4" fill="#e8dfe8"/></svg>
<svg class="b" style="left:731px;top:124px" width="5" height="3" viewBox="0 0 5 3"><path d="M0,0 H5 L2.5,3 Z" fill="#b3b3b3"/></svg>
<svg class="b" style="left:753px;top:120px" width="14" height="10" viewBox="0 0 14 10"><path d="M0,0.5 H14" stroke="#a9a8a9" stroke-width="1"/><path d="M0,3.5 H10" stroke="#a9a8a9" stroke-width="1"/><path d="M0,6.5 H14" stroke="#a9a8a9" stroke-width="1"/><path d="M0,9.5 H10" stroke="#a9a8a9" stroke-width="1"/></svg>
<svg class="b" style="left:775px;top:120px" width="14" height="10" viewBox="0 0 14 10"><path d="M0,0.5 H14" stroke="#a9a8a9" stroke-width="1"/><path d="M2,3.5 H12" stroke="#a9a8a9" stroke-width="1"/><path d="M0,6.5 H14" stroke="#a9a8a9" stroke-width="1"/><path d="M2,9.5 H12" stroke="#a9a8a9" stroke-width="1"/></svg>
<svg class="b" style="left:797px;top:120px" width="14" height="10" viewBox="0 0 14 10"><path d="M0,0.5 H14" stroke="#a9a8a9" stroke-width="1"/><path d="M4,3.5 H14" stroke="#a9a8a9" stroke-width="1"/><path d="M0,6.5 H14" stroke="#a9a8a9" stroke-width="1"/><path d="M4,9.5 H14" stroke="#a9a8a9" stroke-width="1"/></svg>
<svg class="b" style="left:827px;top:117px" width="16" height="15" viewBox="0 0 16 15"><path d="M0.5,14.5 L15.5,0.5 V14.5 Z" fill="#f6f0f6"/><path d="M0.5,14.5 V0.5 H15.5" fill="none" stroke="#a9a8a9" stroke-width="1" stroke-dasharray="1 1.4"/><path d="M0.6,14.4 L15.4,0.6" stroke="#a9a8a9" stroke-width="1.2" fill="none"/><path d="M15.5,0.5 V14.5 H0.5 M10.5,5.5 V14.5 M5.5,10.5 V14.5 M10.5,5.5 H15.5 M5.5,10 H15.5" fill="none" stroke="#a9a8a9" stroke-width="1"/></svg>
<svg class="b" style="left:847px;top:124px" width="5" height="3" viewBox="0 0 5 3"><path d="M0,0 H5 L2.5,3 Z" fill="#b3b3b3"/></svg>
<svg class="b" style="left:933px;top:146px" width="10" height="7" viewBox="0 0 10 7"><path d="M0.8,5.8 L5,1.4 L9.2,5.8" fill="none" stroke="#555" stroke-width="1.7"/></svg>
<svg class="b" style="left:16px;top:236px" width="16" height="13" viewBox="0 0 16 13"><rect x="0" y="0" width="16" height="13" fill="#8a95b6"/><rect x="0" y="0" width="16" height="3.2" fill="#566ca6"/><path d="M1.4,1.4 H4.6 M6.4,1.4 H9.6 M11.4,1.4 H14.4" stroke="#9fb0d6" stroke-width="0.9"/><rect x="1.0" y="3.9" width="4" height="2.2" fill="#ffffff"/><rect x="2.6" y="5.1" width="2.4" height="1" fill="#dfe8fb"/><rect x="6.0" y="3.9" width="4" height="2.2" fill="#ffffff"/><rect x="7.6" y="5.1" width="2.4" height="1" fill="#dfe8fb"/><rect x="11.0" y="3.9" width="4" height="2.2" fill="#cfdcf8"/><rect x="1.0" y="7.0" width="4" height="2.2" fill="#ffffff"/><rect x="2.6" y="8.2" width="2.4" height="1" fill="#dfe8fb"/><rect x="6.0" y="7.0" width="4" height="2.2" fill="#ffffff"/><rect x="7.6" y="8.2" width="2.4" height="1" fill="#dfe8fb"/><rect x="11.0" y="7.0" width="4" height="2.2" fill="#cfdcf8"/><rect x="1.0" y="10.0" width="4" height="2.2" fill="#ffffff"/><rect x="2.6" y="11.2" width="2.4" height="1" fill="#dfe8fb"/><rect x="6.0" y="10.0" width="4" height="2.2" fill="#ffffff"/><rect x="7.6" y="11.2" width="2.4" height="1" fill="#dfe8fb"/><rect x="11.0" y="10.0" width="4" height="2.2" fill="#cfdcf8"/><path d="M15.6,2.6 V12.6 H0.6" fill="none" stroke="#2c3b63" stroke-width="0.9"/></svg>
<svg class="b" style="left:16px;top:260px" width="16" height="13" viewBox="0 0 16 13"><rect x="0" y="0" width="16" height="13" fill="#8a95b6"/><rect x="0" y="0" width="16" height="3.2" fill="#566ca6"/><path d="M1.4,1.4 H4.6 M6.4,1.4 H9.6 M11.4,1.4 H14.4" stroke="#9fb0d6" stroke-width="0.9"/><rect x="1.0" y="3.9" width="4" height="2.2" fill="#ffffff"/><rect x="2.6" y="5.1" width="2.4" height="1" fill="#dfe8fb"/><rect x="6.0" y="3.9" width="4" height="2.2" fill="#ffffff"/><rect x="7.6" y="5.1" width="2.4" height="1" fill="#dfe8fb"/><rect x="11.0" y="3.9" width="4" height="2.2" fill="#cfdcf8"/><rect x="1.0" y="7.0" width="4" height="2.2" fill="#ffffff"/><rect x="2.6" y="8.2" width="2.4" height="1" fill="#dfe8fb"/><rect x="6.0" y="7.0" width="4" height="2.2" fill="#ffffff"/><rect x="7.6" y="8.2" width="2.4" height="1" fill="#dfe8fb"/><rect x="11.0" y="7.0" width="4" height="2.2" fill="#cfdcf8"/><rect x="1.0" y="10.0" width="4" height="2.2" fill="#ffffff"/><rect x="2.6" y="11.2" width="2.4" height="1" fill="#dfe8fb"/><rect x="6.0" y="10.0" width="4" height="2.2" fill="#ffffff"/><rect x="7.6" y="11.2" width="2.4" height="1" fill="#dfe8fb"/><rect x="11.0" y="10.0" width="4" height="2.2" fill="#cfdcf8"/><path d="M15.6,2.6 V12.6 H0.6" fill="none" stroke="#2c3b63" stroke-width="0.9"/></svg>
<svg class="b" style="left:221px;top:163px" width="16" height="13" viewBox="0 0 16 13"><rect x="0" y="0" width="16" height="13" fill="#8a95b6"/><rect x="0" y="0" width="16" height="3.2" fill="#566ca6"/><path d="M1.4,1.4 H4.6 M6.4,1.4 H9.6 M11.4,1.4 H14.4" stroke="#9fb0d6" stroke-width="0.9"/><rect x="1.0" y="3.9" width="4" height="2.2" fill="#ffffff"/><rect x="2.6" y="5.1" width="2.4" height="1" fill="#dfe8fb"/><rect x="6.0" y="3.9" width="4" height="2.2" fill="#ffffff"/><rect x="7.6" y="5.1" width="2.4" height="1" fill="#dfe8fb"/><rect x="11.0" y="3.9" width="4" height="2.2" fill="#cfdcf8"/><rect x="1.0" y="7.0" width="4" height="2.2" fill="#ffffff"/><rect x="2.6" y="8.2" width="2.4" height="1" fill="#dfe8fb"/><rect x="6.0" y="7.0" width="4" height="2.2" fill="#ffffff"/><rect x="7.6" y="8.2" width="2.4" height="1" fill="#dfe8fb"/><rect x="11.0" y="7.0" width="4" height="2.2" fill="#cfdcf8"/><rect x="1.0" y="10.0" width="4" height="2.2" fill="#ffffff"/><rect x="2.6" y="11.2" width="2.4" height="1" fill="#dfe8fb"/><rect x="6.0" y="10.0" width="4" height="2.2" fill="#ffffff"/><rect x="7.6" y="11.2" width="2.4" height="1" fill="#dfe8fb"/><rect x="11.0" y="10.0" width="4" height="2.2" fill="#cfdcf8"/><path d="M15.6,2.6 V12.6 H0.6" fill="none" stroke="#2c3b63" stroke-width="0.9"/></svg>
<svg class="b" style="left:291px;top:163px" width="16" height="13" viewBox="0 0 16 13"><rect x="0" y="0" width="16" height="13" fill="#8a95b6"/><rect x="0" y="0" width="16" height="3.2" fill="#566ca6"/><path d="M1.4,1.4 H4.6 M6.4,1.4 H9.6 M11.4,1.4 H14.4" stroke="#9fb0d6" stroke-width="0.9"/><rect x="1.0" y="3.9" width="4" height="2.2" fill="#ffffff"/><rect x="2.6" y="5.1" width="2.4" height="1" fill="#dfe8fb"/><rect x="6.0" y="3.9" width="4" height="2.2" fill="#ffffff"/><rect x="7.6" y="5.1" width="2.4" height="1" fill="#dfe8fb"/><rect x="11.0" y="3.9" width="4" height="2.2" fill="#cfdcf8"/><rect x="1.0" y="7.0" width="4" height="2.2" fill="#ffffff"/><rect x="2.6" y="8.2" width="2.4" height="1" fill="#dfe8fb"/><rect x="6.0" y="7.0" width="4" height="2.2" fill="#ffffff"/><rect x="7.6" y="8.2" width="2.4" height="1" fill="#dfe8fb"/><rect x="11.0" y="7.0" width="4" height="2.2" fill="#cfdcf8"/><rect x="1.0" y="10.0" width="4" height="2.2" fill="#ffffff"/><rect x="2.6" y="11.2" width="2.4" height="1" fill="#dfe8fb"/><rect x="6.0" y="10.0" width="4" height="2.2" fill="#ffffff"/><rect x="7.6" y="11.2" width="2.4" height="1" fill="#dfe8fb"/><rect x="11.0" y="10.0" width="4" height="2.2" fill="#cfdcf8"/><path d="M15.6,2.6 V12.6 H0.6" fill="none" stroke="#2c3b63" stroke-width="0.9"/></svg>
<svg class="b" style="left:174px;top:168px" width="13" height="13" viewBox="0 0 13 13"><defs><linearGradient id="cb" x1="0" y1="0" x2="0" y2="1"><stop offset="0" stop-color="#f4f4f6"/><stop offset="1" stop-color="#d9d9de"/></linearGradient></defs><circle cx="6.4" cy="6.3" r="5.7" fill="url(#cb)" stroke="#a6a7b0" stroke-width="1.3"/><path d="M3.4,5.2 H9.6 L6.5,8.6 Z" fill="#474a57"/></svg>
<svg class="b" style="left:195px;top:172px" width="9" height="7" viewBox="0 0 9 7"><path d="M3.6,0.4 L0.7,3.5 L3.6,6.6 M7.8,0.4 L4.9,3.5 L7.8,6.6" fill="none" stroke="#333" stroke-width="1.2"/></svg>
<svg class="b" style="left:191px;top:196px" width="14" height="13" viewBox="0 0 14 13"><circle cx="8.8" cy="4.8" r="3.5" fill="#fff" stroke="#3f77b4" stroke-width="1.6"/><path d="M6,7.6 L1.2,11" stroke="#3f77b4" stroke-width="2.2" stroke-linecap="round"/></svg>
<svg class="b" style="left:189px;top:219px" width="8" height="8" viewBox="0 0 8 8"><path d="M0.6,3.6 L3.6,0.7 L6.6,3.6 M0.6,7.6 L3.6,4.7 L6.6,7.6" fill="none" stroke="#333" stroke-width="1.2"/></svg>
<svg class="b" style="left:219px;top:185px" width="12" height="12" viewBox="0 0 12 12"><defs><linearGradient id="sa" x1="0" y1="0" x2="0" y2="1"><stop offset="0" stop-color="#f1f3f6"/><stop offset="1" stop-color="#dde1e8"/></linearGradient></defs><path d="M11,0.8 V11.4 H0.4 Z" fill="url(#sa)"/><path d="M0.4,11.4 L11,0.8" stroke="#b6c9ea" stroke-width="1"/></svg>
<svg class="b" style="left:217px;top:201px" width="9" height="13" viewBox="0 0 9 13"><ellipse cx="4.5" cy="3.4" rx="3.3" ry="2.7" fill="#cfdc6a" stroke="#6a5c14" stroke-width="1"/><circle cx="4.6" cy="2.3" r="0.7" fill="#7a3a10"/><path d="M4.4,6 L3.6,12" stroke="#5e5210" stroke-width="2.6" stroke-linecap="round" fill="none"/><path d="M4.4,6 L3.7,11.6" stroke="#d9e05a" stroke-width="1.1" stroke-linecap="round" fill="none"/><path d="M4.8,7.6 H6.6 M4.6,9.6 H6.2" stroke="#3a3410" stroke-width="1.1" fill="none"/></svg>
<svg class="b" style="left:887px;top:668px" width="14" height="13" viewBox="0 0 14 13"><rect x="0.5" y="0.5" width="13" height="12" fill="#fafafa" stroke="#555" stroke-width="1"/><path d="M0.5,3.5 H13.5 M4.5,3.5 V12.5" stroke="#555" stroke-width="1" fill="none"/><path d="M6.4,6.5 H11.6 M6.4,9.5 H11.6 M1.8,6.5 H3 M1.8,9.5 H3" stroke="#555" stroke-width="1" fill="none"/></svg>
<svg class="b" style="left:924px;top:667px" width="15" height="14" viewBox="0 0 15 14"><path d="M1.5,8.6 V2 L7,8.6 Z" fill="none" stroke="#555" stroke-width="1"/><path d="M7.4,8 L13,2.2 L14.4,3.6 L8.8,9.2 Z" fill="#555"/><rect x="0.5" y="10.5" width="14" height="3" fill="none" stroke="#555" stroke-width="1"/><path d="M3.5,11.6 V13 M6.5,11.6 V13 M9.5,11.6 V13 M12.5,11.6 V13" stroke="#555" stroke-width="0.8"/></svg>
</body></html>
